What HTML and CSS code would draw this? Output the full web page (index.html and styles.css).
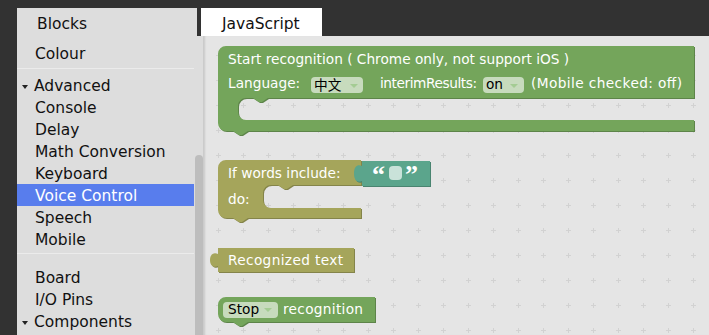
FILE: index.html
```html
<!DOCTYPE html>
<html lang="en">
<head>
    <meta charset="UTF-8">
    <meta name="viewport" content="width=device-width, initial-scale=1.0">
    <title>Blocks - Voice Control</title>
    <link rel="stylesheet" href="styles.css">
</head>
<body>
    <div class="ide">
        <!-- Editor tabs -->
        <div class="tabs">
            <div class="tab tab-blocks">Blocks</div>
            <div class="tab tab-code">JavaScript</div>
        </div>

        <div class="main">
            <!-- Toolbox categories -->
            <div class="toolbox">
                <ul class="cats">
                    <li>Colour</li>
                    <li class="sep"></li>
                    <li class="folder">Advanced</li>
                    <li>Console</li>
                    <li>Delay</li>
                    <li>Math Conversion</li>
                    <li>Keyboard</li>
                    <li class="selected">Voice Control</li>
                    <li>Speech</li>
                    <li>Mobile</li>
                    <li class="sep sep-wide"></li>
                    <li>Board</li>
                    <li>I/O Pins</li>
                    <li class="folder">Components</li>
                </ul>
                <div class="scroll-thumb"></div>
            </div>

            <!-- Block workspace -->
            <div class="workspace">
                <svg class="canvas" width="506" height="299" viewBox="203 36 506 299">
                    <defs>
                        <pattern id="grid" x="206" y="43" width="25" height="25" patternUnits="userSpaceOnUse">
                            <rect x="10" y="12" width="5" height="1" fill="#d2d2d2"/>
                            <rect x="12" y="10" width="1" height="5" fill="#d2d2d2"/>
                        </pattern>
                    </defs>
                    <rect x="203" y="36" width="506" height="299" fill="url(#grid)"/>

                    <!-- Start recognition -->
                    <path class="edge-green" transform="translate(1,1)" d="M218,54 a8,8 0 0 1 8,-8 H694 V98 H268 l-6,4 h-3 l-6,-4 H246 a8,8 0 0 0 -8,8 V112 a8,8 0 0 0 8,8 H694 V131 H248 l-6,4 h-3 l-6,-4 H226 a8,8 0 0 1 -8,-8 Z"/>
                    <path class="blk-green" d="M218,54 a8,8 0 0 1 8,-8 H694 V98 H268 l-6,4 h-3 l-6,-4 H246 a8,8 0 0 0 -8,8 V112 a8,8 0 0 0 8,8 H694 V131 H248 l-6,4 h-3 l-6,-4 H226 a8,8 0 0 1 -8,-8 Z"/>
                    <text class="lbl" x="228" y="64">Start recognition ( Chrome only, not support iOS )</text>
                    <text class="lbl" x="228" y="88">Language:</text>
                    <rect class="field-green" x="311" y="77" width="52" height="16" rx="4"/>
                    <text class="lbl-dark" x="314" y="90">中文</text>
                    <path class="arrow-green" d="M350,84 h8 l-4,4 Z"/>
                    <text class="lbl" x="380" y="88" textLength="97">interimResults:</text>
                    <rect class="field-green" x="483" y="77" width="41" height="16" rx="4"/>
                    <text class="lbl-dark" x="486" y="89">on</text>
                    <path class="arrow-green" d="M510,84 h8 l-4,4 Z"/>
                    <text class="lbl" x="531" y="88" textLength="151">(Mobile checked: off)</text>

                    <!-- If words include -->
                    <path class="edge-olive" transform="translate(1,1)" d="M218,168 a8,8 0 0 1 8,-8 H361 V185 H293 l-6,4 h-3 l-6,-4 H271 a8,8 0 0 0 -8,8 V200 a8,8 0 0 0 8,8 H361 V218 H248 l-6,4 h-3 l-6,-4 H226 a8,8 0 0 1 -8,-8 Z"/>
                    <path class="blk-olive" d="M218,168 a8,8 0 0 1 8,-8 H361 V185 H293 l-6,4 h-3 l-6,-4 H271 a8,8 0 0 0 -8,8 V200 a8,8 0 0 0 8,8 H361 V218 H248 l-6,4 h-3 l-6,-4 H226 a8,8 0 0 1 -8,-8 Z"/>
                    <text class="lbl" x="228" y="178">If words include:</text>
                    <text class="lbl" x="228" y="204">do:</text>
                    <path class="edge-teal" transform="translate(1,1)" d="M362,161 H430 V186 H362 V181 c-4,2 -8,0 -8,-7.5 s4,-9.5 8,-7.5 Z"/>
                    <path class="blk-teal" d="M362,161 H430 V186 H362 V181 c-4,2 -8,0 -8,-7.5 s4,-9.5 8,-7.5 Z"/>
                    <text class="quote" x="372" y="183">“</text>
                    <rect class="field-teal" x="389" y="166" width="13" height="14" rx="4"/>
                    <text class="quote" x="405" y="183">”</text>

                    <!-- Recognized text -->
                    <path class="edge-olive" transform="translate(1,1)" d="M218,248 H354 V272 H218 V266 c-4,2 -8,0 -8,-6 s4,-8 8,-6 Z"/>
                    <path class="blk-olive" d="M218,248 H354 V272 H218 V266 c-4,2 -8,0 -8,-6 s4,-8 8,-6 Z"/>
                    <text class="lbl" x="228" y="265" textLength="115">Recognized text</text>

                    <!-- Stop recognition -->
                    <path class="edge-green" transform="translate(1,1)" d="M218,305 a8,8 0 0 1 8,-8 H375 V322 H248 l-6,4 h-3 l-6,-4 H226 a8,8 0 0 1 -8,-8 Z"/>
                    <path class="blk-green" d="M218,305 a8,8 0 0 1 8,-8 H375 V322 H248 l-6,4 h-3 l-6,-4 H226 a8,8 0 0 1 -8,-8 Z"/>
                    <rect class="field-green" x="223" y="302" width="55" height="16" rx="4"/>
                    <text class="lbl-dark" x="228" y="314">Stop</text>
                    <path class="arrow-green" d="M264,308 h8 l-4,4 Z"/>
                    <text class="lbl" x="283" y="314" textLength="80">recognition</text>
                </svg>
            </div>
        </div>
    </div>
</body>
</html>
```

FILE: styles.css
```css
/* General Reset */
* {
    margin: 0;
    padding: 0;
    box-sizing: border-box;
}

body {
    background-color: #323232;
    font-family: "DejaVu Sans", "Noto Sans CJK SC", sans-serif;
    color: #111;
    overflow: hidden;
}

.ide {
    padding: 8px 0 0 17px;
}

/* Tabs */
.tabs {
    display: flex;
    gap: 4px;
    height: 28px;
}

.tab {
    font-size: 15.5px;
    line-height: 28px;
    padding-top: 2px;
}

.tab-blocks {
    width: 180px;
    padding-left: 20px;
    background-color: #dddddd;
}

.tab-code {
    width: 121px;
    padding-left: 21px;
    background-color: #fff;
}

.main {
    display: flex;
    height: 299px;
}

/* Toolbox */
.toolbox {
    position: relative;
    width: 186px;
    background-color: #dddddd;
}

.cats {
    list-style: none;
    padding: 6px 9px 0 0;
}

.cats li {
    height: 22px;
    line-height: 24px;
    padding-left: 18px;
    font-size: 15.5px;
    white-space: nowrap;
}

.cats li.sep {
    height: 5px;
    margin-bottom: 5px;
    border-bottom: 1px solid #ebebeb;
}

.cats li.sep-wide {
    height: 4px;
    margin-bottom: 12px;
}

.cats li.folder::before {
    content: "";
    display: inline-block;
    margin-left: -13px;
    margin-right: 6px;
    vertical-align: middle;
    border-left: 3.5px solid transparent;
    border-right: 3.5px solid transparent;
    border-top: 4px solid #222;
}

.cats li.selected {
    background-color: #587ded;
    color: #fff;
}

.scroll-thumb {
    position: absolute;
    left: 178px;
    top: 119px;
    bottom: 0;
    width: 8px;
    background-color: #bdbdbd;
    border-radius: 4px 4px 0 0;
}

/* Workspace */
.workspace {
    flex: 1;
    background-color: #e5e5e5;
    box-shadow: inset 3px 0 2px -1px rgba(0, 0, 0, 0.12);
}

.canvas {
    display: block;
}

.blk-green { fill: #74a55b; }
.blk-olive { fill: #a5a55b; }
.blk-teal { fill: #5ba58c; }

.edge-green { fill: #5d8449; }
.edge-olive { fill: #84844a; }
.edge-teal { fill: #498470; }

.field-green { fill: #c7dbbd; }
.field-teal { fill: #c9e2d9; }
.arrow-green { fill: #a4cc93; }

.lbl, .lbl-dark {
    font-family: "DejaVu Sans", "Noto Sans CJK SC", sans-serif;
    font-size: 13.7px;
}

.lbl { fill: #fff; }
.lbl-dark { fill: #000; }

.quote {
    fill: #fff;
    font-family: "Liberation Serif", serif;
    font-size: 26px;
    font-weight: bold;
}
```
